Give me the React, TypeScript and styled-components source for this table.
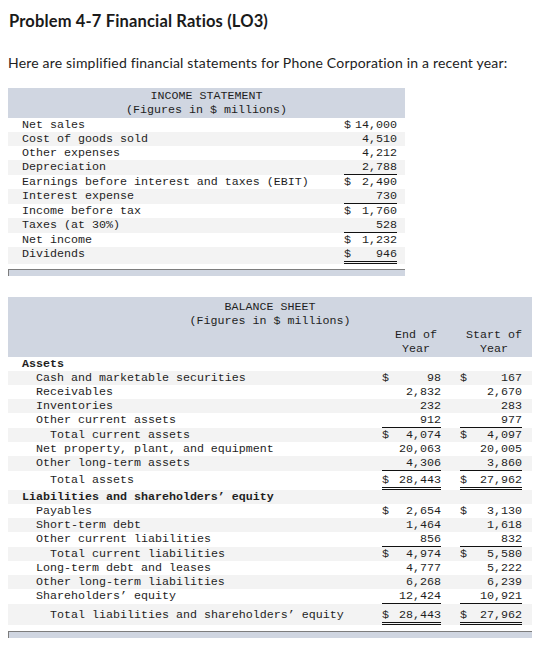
import React from 'react';
import styled, { createGlobalStyle, css } from 'styled-components';

const GlobalStyle = createGlobalStyle`
  html, body { margin: 0; padding: 0; background: #ffffff; }
  body { font-family: Lato, "Open Sans", sans-serif; color: #222222; }
`;

const MONO = `"Liberation Mono", "Courier New", monospace`;
const HEAD_BG = '#d0d6e1';
const STRIPE_BG = '#f3f3f3';

const Page = styled.div`
  padding: 8px;
`;

const Title = styled.h1`
  font-family: Lato, "Open Sans", sans-serif;
  font-size: 16.5px;
  font-weight: 700;
  letter-spacing: 0.15px;
  line-height: 20px;
  margin: 3px 0 0 1px;
  color: #1a1a1a;
`;

const Intro = styled.p`
  font-family: Lato, "Open Sans", sans-serif;
  font-size: 14px;
  letter-spacing: 0.19px;
  line-height: 20px;
  margin: 22px 0 0 0;
  color: #222222;
`;

const Sheet = styled.div<{ $width: number; $top: number }>`
  width: ${(p) => p.$width}px;
  margin-top: ${(p) => p.$top}px;
  font-family: ${MONO};
  font-size: 11.67px;
  color: #1e1e1e;
`;

const SheetHeader = styled.div<{ $padTop: number }>`
  background: ${HEAD_BG};
  padding: ${(p) => p.$padTop}px 0 1px 0;
`;

const HeaderLine = styled.div`
  text-align: center;
  line-height: 14px;
  height: 14px;
  white-space: pre;
`;

const ColumnHeads = styled.div`
  display: flex;
`;

const HeadSpacer = styled.div`
  flex: 1;
`;

const HeadCell = styled.div<{ $width: number; $gap: number; $shift: number }>`
  width: ${(p) => p.$width}px;
  margin-right: ${(p) => p.$gap}px;
  padding-left: ${(p) => p.$shift}px;
  box-sizing: border-box;
  text-align: center;
  line-height: 14px;
  white-space: pre;
`;

const Row = styled.div<{ $shade: boolean; $padTop: number }>`
  display: flex;
  align-items: flex-start;
  background: ${(p) => (p.$shade ? STRIPE_BG : '#ffffff')};
  padding-top: ${(p) => p.$padTop}px;
`;

const Label = styled.div<{ $indent: number; $bold?: boolean }>`
  flex: 1;
  padding-left: ${(p) => p.$indent}px;
  line-height: 14px;
  height: 14px;
  white-space: pre;
  font-weight: ${(p) => (p.$bold ? 700 : 400)};
`;

type Rule = 'none' | 'single' | 'double';

const ValueCell = styled.div<{ $width: number; $gap: number; $rule: Rule }>`
  width: ${(p) => p.$width}px;
  margin-right: ${(p) => p.$gap}px;
  display: flex;
  justify-content: space-between;
  line-height: 14px;
  height: 14px;
  white-space: pre;
  ${(p) =>
    p.$rule === 'single' &&
    css`
      border-bottom: 1px solid #111111;
    `}
  ${(p) =>
    p.$rule === 'double' &&
    css`
      border-bottom: 3px double #111111;
    `}
`;

const FooterBar = styled.div<{ $width: number; $top: number }>`
  width: ${(p) => p.$width}px;
  margin-top: ${(p) => p.$top}px;
  height: 7px;
  background: ${HEAD_BG};
  border-top: 1px solid #7d7d7d;
  border-left: 1px solid #7d7d7d;
  box-sizing: border-box;
`;

type IncomeRow = { label: string; value: string; dollar?: boolean; rule?: Rule };

const incomeRows: IncomeRow[] = [
  { label: 'Net sales', value: '14,000', dollar: true },
  { label: 'Cost of goods sold', value: '4,510' },
  { label: 'Other expenses', value: '4,212' },
  { label: 'Depreciation', value: '2,788', rule: 'single' },
  { label: 'Earnings before interest and taxes (EBIT)', value: '2,490', dollar: true },
  { label: 'Interest expense', value: '730', rule: 'single' },
  { label: 'Income before tax', value: '1,760', dollar: true },
  { label: 'Taxes (at 30%)', value: '528', rule: 'single' },
  { label: 'Net income', value: '1,232', dollar: true },
  { label: 'Dividends', value: '946', dollar: true, rule: 'double' },
];

type BalanceRow = {
  label: string;
  level: 0 | 1 | 2;
  bold?: boolean;
  end?: string;
  start?: string;
  dollar?: boolean;
  rule?: Rule;
  padTop?: number;
};

const balanceRows: BalanceRow[] = [
  { label: 'Assets', level: 0, bold: true },
  { label: 'Cash and marketable securities', level: 1, end: '98', start: '167', dollar: true },
  { label: 'Receivables', level: 1, end: '2,832', start: '2,670' },
  { label: 'Inventories', level: 1, end: '232', start: '283' },
  { label: 'Other current assets', level: 1, end: '912', start: '977', rule: 'single' },
  { label: 'Total current assets', level: 2, end: '4,074', start: '4,097', dollar: true },
  { label: 'Net property, plant, and equipment', level: 1, end: '20,063', start: '20,005' },
  { label: 'Other long-term assets', level: 1, end: '4,306', start: '3,860', rule: 'single' },
  { label: 'Total assets', level: 2, end: '28,443', start: '27,962', dollar: true, rule: 'double', padTop: 2 },
  { label: 'Liabilities and shareholders’ equity', level: 0, bold: true },
  { label: 'Payables', level: 1, end: '2,654', start: '3,130', dollar: true },
  { label: 'Short-term debt', level: 1, end: '1,464', start: '1,618' },
  { label: 'Other current liabilities', level: 1, end: '856', start: '832', rule: 'single' },
  { label: 'Total current liabilities', level: 2, end: '4,974', start: '5,580', dollar: true },
  { label: 'Long-term debt and leases', level: 1, end: '4,777', start: '5,222' },
  { label: 'Other long-term liabilities', level: 1, end: '6,268', start: '6,239' },
  { label: 'Shareholders’ equity', level: 1, end: '12,424', start: '10,921', rule: 'single' },
  { label: 'Total liabilities and shareholders’ equity', level: 2, end: '28,443', start: '27,962', dollar: true, rule: 'double', padTop: 4 },
];

const INDENT = [14, 28, 42];

const Amount: React.FC<{ dollar?: boolean; value?: string; width: number; gap: number; rule: Rule }> = ({
  dollar,
  value,
  width,
  gap,
  rule,
}) => (
  <ValueCell $width={width} $gap={gap} $rule={rule}>
    <span>{dollar ? '$' : ''}</span>
    <span>{value ?? ''}</span>
  </ValueCell>
);

const IncomeStatement: React.FC = () => (
  <>
    <Sheet $width={397} $top={15}>
      <SheetHeader $padTop={1}>
        <HeaderLine>INCOME STATEMENT</HeaderLine>
        <HeaderLine>(Figures in $ millions)</HeaderLine>
      </SheetHeader>
      {incomeRows.map((r, i) => (
        <Row key={r.label} $shade={i % 2 === 1} $padTop={0}>
          <Label $indent={14}>{r.label}</Label>
          <Amount dollar={r.dollar} value={r.value} width={53} gap={8} rule={r.rule ?? 'none'} />
        </Row>
      ))}
    </Sheet>
    <FooterBar $width={397} $top={5} />
  </>
);

const BalanceSheet: React.FC = () => (
  <>
    <Sheet $width={524} $top={21}>
      <SheetHeader $padTop={3}>
        <HeaderLine>BALANCE SHEET</HeaderLine>
        <HeaderLine>(Figures in $ millions)</HeaderLine>
        <ColumnHeads>
          <HeadSpacer />
          <HeadCell $width={59} $gap={19} $shift={9}>
            End of{'\n'}Year
          </HeadCell>
          <HeadCell $width={62} $gap={10} $shift={6}>
            Start of{'\n'}Year
          </HeadCell>
        </ColumnHeads>
      </SheetHeader>
      {balanceRows.map((r, i) => (
        <Row key={r.label} $shade={i % 2 === 1} $padTop={r.padTop ?? 0}>
          <Label $indent={INDENT[r.level]} $bold={r.bold}>
            {r.label}
          </Label>
          <Amount dollar={r.dollar} value={r.end} width={59} gap={19} rule={r.rule ?? 'none'} />
          <Amount dollar={r.dollar} value={r.start} width={62} gap={10} rule={r.rule ?? 'none'} />
        </Row>
      ))}
    </Sheet>
    <FooterBar $width={524} $top={6} />
  </>
);

export default function App() {
  return (
    <Page>
      <GlobalStyle />
      <Title>Problem 4-7 Financial Ratios (LO3)</Title>
      <Intro>Here are simplified financial statements for Phone Corporation in a recent year:</Intro>
      <IncomeStatement />
      <BalanceSheet />
    </Page>
  );
}
